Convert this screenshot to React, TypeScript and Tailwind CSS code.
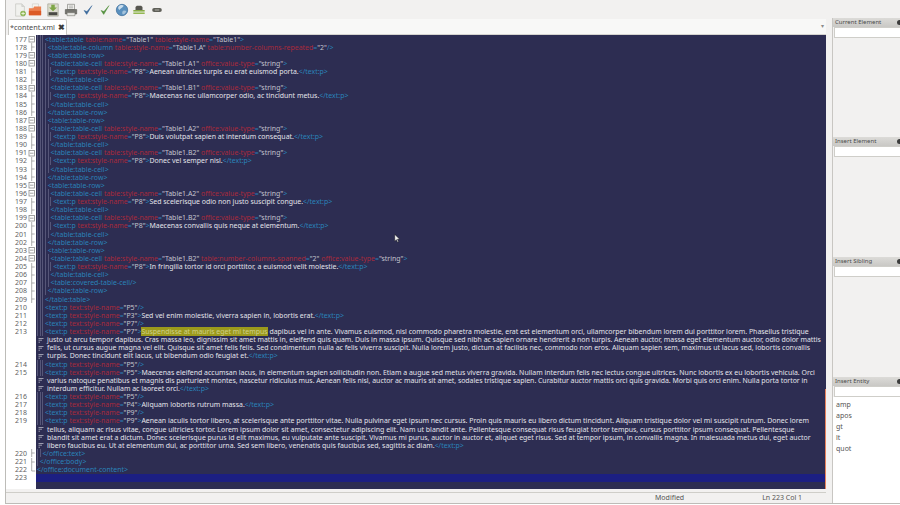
import type { ReactNode } from "react";

type Row = {
  no?: number;
  level: number;
  text: string;
  fold?: "box" | "line" | "end";
  wrapped?: boolean;
  tight?: boolean;
  current?: boolean;
  highlight?: string;
};

const cellAttrs = (name: string) =>
  `table:style-name="${name}" office:value-type="string"`;

function cell(no: number, name: string, body: string): Row[] {
  return [
    { no, level: 5, text: `<table:table-cell ${cellAttrs(name)}>`, fold: "box" },
    {
      no: no + 1,
      level: 6,
      text: `<text:p text:style-name="P8">${body}</text:p>`,
      fold: "line",
    },
    { no: no + 2, level: 5, text: "</table:table-cell>", fold: "line" },
  ];
}

const rows: Row[] = [
  {
    no: 177,
    level: 3,
    text: '<table:table table:name="Table1" table:style-name="Table1">',
    fold: "box",
  },
  {
    no: 178,
    level: 4,
    text: '<table:table-column table:style-name="Table1.A" table:number-columns-repeated="2"/>',
    fold: "line",
  },
  { no: 179, level: 4, text: "<table:table-row>", fold: "box" },
  ...cell(180, "Table1.A1", "Aenean ultricies turpis eu erat euismod porta."),
  ...cell(183, "Table1.B1", "Maecenas nec ullamcorper odio, ac tincidunt metus."),
  { no: 186, level: 4, text: "</table:table-row>", fold: "line" },
  { no: 187, level: 4, text: "<table:table-row>", fold: "box" },
  ...cell(188, "Table1.A2", "Duis volutpat sapien at interdum consequat."),
  ...cell(191, "Table1.B2", "Donec vel semper nisl."),
  { no: 194, level: 4, text: "</table:table-row>", fold: "line" },
  { no: 195, level: 4, text: "<table:table-row>", fold: "box" },
  ...cell(196, "Table1.A2", "Sed scelerisque odio non justo suscipit congue."),
  ...cell(199, "Table1.B2", "Maecenas convallis quis neque at elementum."),
  { no: 202, level: 4, text: "</table:table-row>", fold: "line" },
  { no: 203, level: 4, text: "<table:table-row>", fold: "box" },
  {
    no: 204,
    level: 5,
    text: '<table:table-cell table:style-name="Table1.B2" table:number-columns-spanned="2" office:value-type="string">',
    fold: "box",
  },
  {
    no: 205,
    level: 6,
    text: '<text:p text:style-name="P8">In fringilla tortor id orci porttitor, a euismod velit molestie.</text:p>',
    fold: "line",
  },
  { no: 206, level: 5, text: "</table:table-cell>", fold: "line" },
  { no: 207, level: 5, text: "<table:covered-table-cell/>", fold: "line" },
  { no: 208, level: 4, text: "</table:table-row>", fold: "line" },
  { no: 209, level: 3, text: "</table:table>", fold: "line" },
  { no: 210, level: 3, text: '<text:p text:style-name="P5"/>' },
  {
    no: 211,
    level: 3,
    text: '<text:p text:style-name="P3">Sed vel enim molestie, viverra sapien in, lobortis erat.</text:p>',
  },
  { no: 212, level: 3, text: '<text:p text:style-name="P7"/>' },
  {
    no: 213,
    level: 3,
    highlight: "Suspendisse at mauris eget mi tempus",
    text: '<text:p text:style-name="P7">Suspendisse at mauris eget mi tempus dapibus vel in ante. Vivamus euismod, nisl commodo pharetra molestie, erat est elementum orci, ullamcorper bibendum lorem dui porttitor lorem. Phasellus tristique',
  },
  {
    wrapped: true,
    tight: true,
    level: 3,
    text: "justo ut arcu tempor dapibus. Cras massa leo, dignissim sit amet mattis in, eleifend quis quam. Duis in massa ipsum. Quisque sed nibh ac sapien ornare hendrerit a non turpis. Aenean auctor, massa eget elementum auctor, odio dolor mattis",
  },
  {
    wrapped: true,
    level: 3,
    text: "felis, ut cursus augue magna vel elit. Quisque sit amet felis felis. Sed condimentum nulla ac felis viverra suscipit. Nulla lorem justo, dictum at facilisis nec, commodo non eros. Aliquam sapien sem, maximus ut lacus sed, lobortis convallis",
  },
  {
    wrapped: true,
    level: 3,
    text: "turpis. Donec tincidunt elit lacus, ut bibendum odio feugiat et.</text:p>",
  },
  { no: 214, level: 3, text: '<text:p text:style-name="P5"/>' },
  {
    no: 215,
    level: 3,
    text: '<text:p text:style-name="P5">Maecenas eleifend accumsan lacus, in elementum sapien sollicitudin non. Etiam a augue sed metus viverra gravida. Nullam interdum felis nec lectus congue ultrices. Nunc lobortis ex eu lobortis vehicula. Orci',
  },
  {
    wrapped: true,
    tight: true,
    level: 3,
    text: "varius natoque penatibus et magnis dis parturient montes, nascetur ridiculus mus. Aenean felis nisl, auctor ac mauris sit amet, sodales tristique sapien. Curabitur auctor mattis orci quis gravida. Morbi quis orci enim. Nulla porta tortor in",
  },
  {
    wrapped: true,
    level: 3,
    text: "interdum efficitur. Nullam ac laoreet orci.</text:p>",
  },
  { no: 216, level: 3, text: '<text:p text:style-name="P5"/>' },
  {
    no: 217,
    level: 3,
    text: '<text:p text:style-name="P4">Aliquam lobortis rutrum massa.</text:p>',
  },
  { no: 218, level: 3, text: '<text:p text:style-name="P9"/>' },
  {
    no: 219,
    level: 3,
    text: '<text:p text:style-name="P9">Aenean iaculis tortor libero, at scelerisque ante porttitor vitae. Nulla pulvinar eget ipsum nec cursus. Proin quis mauris eu libero dictum tincidunt. Aliquam tristique dolor vel mi suscipit rutrum. Donec lorem',
  },
  {
    wrapped: true,
    level: 3,
    text: "tellus, aliquam ac risus vitae, congue ultricies tortor. Lorem ipsum dolor sit amet, consectetur adipiscing elit. Nam ut blandit ante. Pellentesque consequat risus feugiat tortor tempus, cursus porttitor ipsum consequat. Pellentesque",
  },
  {
    wrapped: true,
    level: 3,
    text: "blandit sit amet erat a dictum. Donec scelerisque purus id elit maximus, eu vulputate ante suscipit. Vivamus mi purus, auctor in auctor et, aliquet eget risus. Sed at tempor ipsum, in convallis magna. In malesuada metus dui, eget auctor",
  },
  {
    wrapped: true,
    level: 3,
    text: "libero faucibus eu. Ut at elementum dui, ac porttitor urna. Sed sem libero, venenatis quis faucibus sed, sagittis ac diam.</text:p>",
  },
  { no: 220, level: 2, text: "</office:text>", fold: "line" },
  { no: 221, level: 1, text: "</office:body>", fold: "line" },
  { no: 222, level: 0, text: "</office:document-content>", fold: "end" },
  { no: 223, level: 0, text: "", current: true },
];

// xml colouring: tags blue, attribute names red, values grey, the rest white
function colourTag(tag: string, key: number) {
  const parts = tag.match(/^(<\/?[\w:-]+)(.*?)(\/?>)$/);

  if (!parts) {
    return <span key={key}>{tag}</span>;
  }

  const attrs: ReactNode[] = [];
  const attrRe = /(\s+)([\w:.-]+)(=)("[^"]*")/g;
  let match = attrRe.exec(parts[2]);

  while (match) {
    attrs.push(
      <span key={match.index}>
        <span className="text-[#a82a3c]">
          {match[1]}
          {match[2]}
        </span>
        <span className="text-[#2a82b8]">{match[3]}</span>
        <span className="text-[#c4c4ce]">{match[4]}</span>
      </span>,
    );
    match = attrRe.exec(parts[2]);
  }

  return (
    <span key={key}>
      <span className="text-[#2a82b8]">{parts[1]}</span>
      {attrs}
      <span className="text-[#2a82b8]">{parts[3]}</span>
    </span>
  );
}

function colourLine(text: string, highlight?: string) {
  return text.split(/(<[^>]+>)/).map((piece, index) => {
    if (piece.startsWith("<")) {
      return colourTag(piece, index);
    }

    if (highlight && piece.startsWith(highlight)) {
      return (
        <span key={index} className="text-[#e4e4ea]">
          <span className="bg-[#9c9a1c] text-[#cfd08a]">{highlight}</span>
          {piece.slice(highlight.length)}
        </span>
      );
    }

    return (
      <span key={index} className="text-[#e4e4ea]">
        {piece}
      </span>
    );
  });
}

function FoldMark({ fold }: { fold?: Row["fold"] }) {
  if (fold === "box") {
    return (
      <svg viewBox="0 0 8 8" className="h-[8px] w-[8px] text-[#8a8a8a]">
        <rect x="1" y="1.5" width="5.5" height="5.5" fill="#fff" stroke="currentColor" strokeWidth="0.8" />
        <path d="M2 4.2h3.5" stroke="currentColor" strokeWidth="0.8" />
      </svg>
    );
  }

  if (fold === "line") {
    return (
      <svg viewBox="0 0 8 8" className="h-[8px] w-[8px] text-[#8a8a8a]">
        <path d="M3.7 0v8M3.7 4h3" stroke="currentColor" strokeWidth="0.7" fill="none" />
      </svg>
    );
  }

  if (fold === "end") {
    return (
      <svg viewBox="0 0 8 8" className="h-[8px] w-[8px] text-[#8a8a8a]">
        <path d="M3.7 0v5h3.5" stroke="currentColor" strokeWidth="0.7" fill="none" />
      </svg>
    );
  }

  return null;
}

function WrapMark() {
  return (
    <svg viewBox="0 0 6 6" className="ml-[2px] h-[6px] w-[6px] shrink-0">
      <path d="M0.5 1.5h5M0.5 3.2h3.5M2 5.2h-1.500" stroke="#b9b9c6" strokeWidth="0.8" fill="none" />
    </svg>
  );
}

function EditorRow({ row }: { row: Row }) {
  const guides = Array.from({ length: row.level }, (_, index) => index);

  return (
    <div className="flex h-[8.13px] items-center">
      <div className="flex h-full w-[22px] shrink-0 items-center justify-end bg-white pr-[1px] pt-[1.500px] text-[#5f5f5f]">
        {row.no}
      </div>
      <div className="flex h-full w-[8px] shrink-0 items-center bg-white">
        <FoldMark fold={row.fold} />
      </div>
      <div
        className={
          row.current
            ? "flex h-full min-w-0 flex-1 items-center bg-[#1c1f82]"
            : "flex h-full min-w-0 flex-1 items-center"
        }
      >
        {row.wrapped ? (
          <>
            <WrapMark />
            <span
              className={
                row.tight
                  ? "ml-[3px] whitespace-nowrap pt-[1.500px] tracking-[-0.022px]"
                  : "ml-[3px] whitespace-nowrap pt-[1.500px]"
              }
            >
              {colourLine(row.text)}
            </span>
          </>
        ) : (
          <>
            <div className="w-[1px] shrink-0" />
            {guides.map((guide) => (
              <div
                key={guide}
                className="h-full w-[2.7px] shrink-0 border-l-[0.5px] border-[#565678]"
              />
            ))}
            <span className="whitespace-nowrap pt-[1.500px]">
              {colourLine(row.text, row.highlight)}
            </span>
          </>
        )}
      </div>
    </div>
  );
}

function ToolIcons() {
  return (
    <div className="flex h-[18px] items-center pl-[1px] pt-[2px]">
      {/* new file */}
      <svg viewBox="0 0 16 16" className="ml-[6px] h-[14px] w-[14px]">
        <path d="M3 1h7l3 3v11H3z" fill="#f1f1ee" stroke="#c4c4bf" strokeWidth="0.8" />
        <path d="M10 1v3h3" fill="#d9d9d5" stroke="#c4c4bf" strokeWidth="0.6" />
        <circle cx="11.500" cy="12" r="3.200" fill="#8db552" />
        <path d="M11.500 10v4M9.500 12h4" stroke="#eef5e0" strokeWidth="1" />
      </svg>
      {/* open */}
      <svg viewBox="0 0 16 16" className="ml-[1px] h-[14px] w-[14px]">
        <path d="M5 1h7v6H5z" fill="#f4f2ee" stroke="#c9c6bf" strokeWidth="0.6" />
        <path d="M1 6h5l1-2h8v10H1z" fill="#ec8050" />
        <path d="M1 9h14v5H1z" fill="#dc5a26" />
      </svg>
      {/* save */}
      <svg viewBox="0 0 16 16" className="ml-[4px] h-[14px] w-[14px]">
        <path d="M2 1h12v14H2z" fill="#dcdccd" stroke="#9a9a8c" strokeWidth="0.7" />
        <path d="M3 10.500h10v3.500H3z" fill="#4a4a45" />
        <path d="M6 2h4v3h2.500L8 9.500 3.500 5H6z" fill="#7ea647" />
      </svg>
      {/* print */}
      <svg viewBox="0 0 16 16" className="ml-[4px] h-[14px] w-[14px]">
        <path d="M4 1.500h8v6H4z" fill="#f4f4f2" stroke="#858580" strokeWidth="0.8" />
        <path d="M5.500 3.500h5M5.500 5.500h5" stroke="#858580" strokeWidth="0.7" />
        <path d="M1.500 7.500h13v5h-13z" fill="#74746f" stroke="#55554f" strokeWidth="0.7" />
        <path d="M3.500 11h9v3.500h-9z" fill="#e6e6e2" stroke="#66665f" strokeWidth="0.6" />
      </svg>
      {/* check, blue */}
      <svg viewBox="0 0 16 16" className="ml-[3px] h-[14px] w-[14px]">
        <path d="M3.500 8.500l3 4.500L12.500 3 6.800 9.800z" fill="#3b6a9c" stroke="#3b6a9c" strokeWidth="0.6" strokeLinejoin="round" />
      </svg>
      {/* check, green */}
      <svg viewBox="0 0 16 16" className="ml-[3px] h-[14px] w-[14px]">
        <path d="M3.500 8.500l3 4.500L12.500 3 6.800 9.800z" fill="#55913f" stroke="#55913f" strokeWidth="0.6" strokeLinejoin="round" />
      </svg>
      {/* globe */}
      <svg viewBox="0 0 16 16" className="ml-[3px] h-[14px] w-[14px]">
        <circle cx="8" cy="8" r="6.500" fill="#5a90be" stroke="#3a6a98" strokeWidth="0.8" />
        <path d="M4 4c2-2 5-2 6-1-1 2-4 3-5 5-1-1-2-2-1-4z" fill="#c9dcec" />
        <path d="M9 9c2-1 3 0 4 0-1 3-3 4-4 4-1-1-1-3 0-4z" fill="#a5c3db" />
      </svg>
      {/* stack */}
      <svg viewBox="0 0 16 16" className="ml-[3px] h-[14px] w-[14px]">
        <path d="M4 4.500l1.500-1.500h5L12 4.500V8H4z" fill="#56564f" />
        <path d="M1.500 8h13v1.800h-13z" fill="#86aa44" />
        <path d="M1.500 10.800h13v1.800h-13z" fill="#94b852" />
      </svg>
      {/* link */}
      <svg viewBox="0 0 16 16" className="ml-[4px] h-[14px] w-[14px]">
        <rect x="2.500" y="5.800" width="11" height="4.400" rx="2.200" fill="#5f5f58" />
        <path d="M5.500 8h5" stroke="#c4c4bd" strokeWidth="0.9" />
      </svg>
    </div>
  );
}

function SidePanel({
  title,
  grow,
  children,
}: {
  title: string;
  grow: string;
  children?: ReactNode;
}) {
  return (
    <div className={`flex flex-col border-l border-[#c8c6c2] ${grow}`}>
      <div className="flex h-[9px] shrink-0 items-center justify-between bg-gradient-to-b from-[#dcdbd8] to-[#c9c8c5] pl-[2px] text-[6px] text-[#4a4a4a]">
        <span>{title}</span>
        <span className="mr-[-2px] h-[5px] w-[5px] rounded-full bg-[#3c3c3c]" />
      </div>
      <div className="ml-[1px] h-[11px] shrink-0 border-y border-l border-[#cfcec9] bg-white" />
      {children}
    </div>
  );
}

export default function App() {
  return (
    <div
      className="relative h-[505px] w-[900px] overflow-hidden bg-white pl-[5px] text-[6.95px]"
      style={{ fontFamily: '"Noto Sans", "Open Sans", sans-serif' }}
    >
      <div className="flex h-[504px] flex-col border-b border-l border-[#bdbcb8] bg-[#f2f1f0]">
        <ToolIcons />
        <div className="flex min-h-0 flex-1">
          <div className="flex w-[820px] shrink-0 flex-col">
            <div className="flex h-[17px] items-end">
              <div className="ml-[2px] flex h-[16px] w-[59px] items-center gap-[3px] rounded-t-[2px] border border-b-0 border-[#c9c8c4] bg-white pl-[1px] text-[7.300px] text-[#4a4a4a]">
                <span>*content.xml</span>
                <span className="text-[8px] font-bold leading-none text-[#3c3c3c]">✖</span>
              </div>
              <div className="flex h-[16px] flex-1 items-center justify-end border-b border-[#d5d4d0] bg-[#f8f8f7] pr-[2px] text-[6px] text-[#8a8a8a]">
                ▾
              </div>
            </div>
            <div className="flex h-[455px] bg-[#2d2d52]">
              <div className="flex min-w-0 flex-1 flex-col overflow-hidden">
                {rows.map((row, index) => (
                  <EditorRow key={index} row={row} />
                ))}
                <div className="w-[30px] flex-1 bg-white" />
              </div>
              <div className="flex w-[1.500px] shrink-0 flex-col justify-end">
                <div className="h-[100px] bg-[#e8815c]" />
              </div>
            </div>
            <div className="mt-[3px] flex flex-1 items-center border-t border-[#cfcec9] text-[7px] text-[#555]">
              <span className="ml-[649px]">Modified</span>
              <span className="ml-[78px]">Ln 223 Col 1</span>
            </div>
          </div>
          <div className="flex min-w-0 flex-1 flex-col pl-[6px] text-[#4a4a4a]">
            <SidePanel title="Current Element" grow="h-[119px]" />
            <SidePanel title="Insert Element" grow="h-[120px]" />
            <SidePanel title="Insert Sibling" grow="h-[120px]" />
            <SidePanel title="Insert Entity" grow="flex-1">
              <div className="flex-1 bg-white pl-[3px] pt-[2px] text-[7px] leading-[11px] text-[#555]">
                <div>amp</div>
                <div>apos</div>
                <div>gt</div>
                <div>lt</div>
                <div>quot</div>
              </div>
            </SidePanel>
          </div>
        </div>
      </div>
      {/* mouse pointer lying over the editor */}
      <svg viewBox="0 0 8 12" className="absolute left-[394px] top-[234px] h-[9px] w-[6px]">
        <path d="M1 0.500v9l2.200-2 1.500 3.500 1.400-.6-1.500-3.400h3z" fill="#f4f4f4" stroke="#111" strokeWidth="0.6" />
      </svg>
    </div>
  );
}
